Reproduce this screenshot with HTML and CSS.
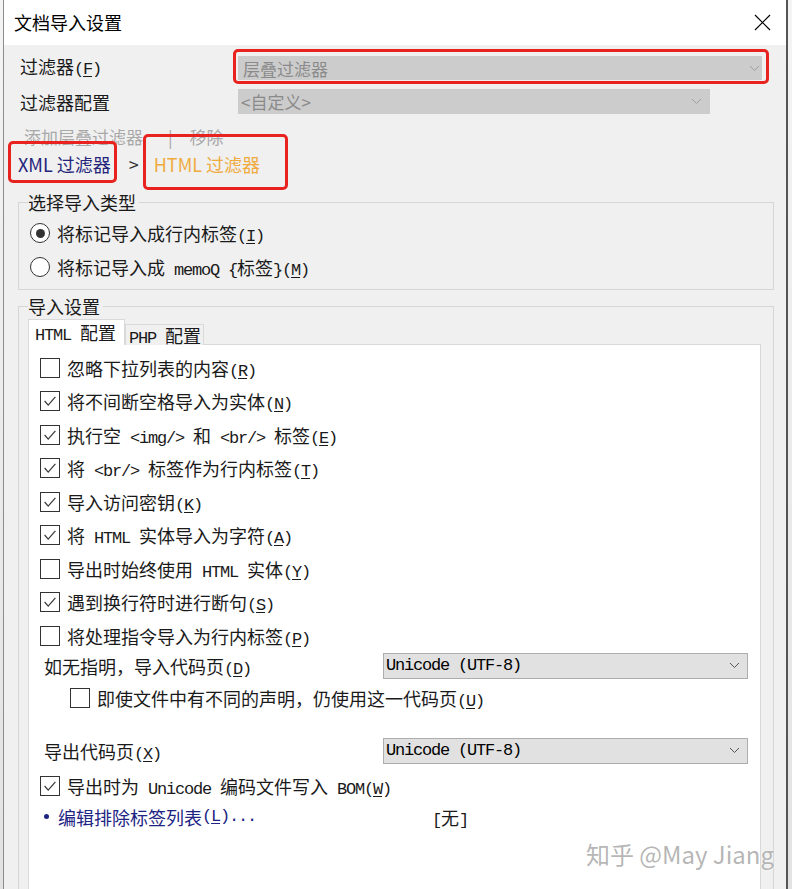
FILE: index.html
```html
<!DOCTYPE html>
<html lang="zh-CN">
<head>
  <meta charset="UTF-8">
  <title>文档导入设置</title>
  <link rel="stylesheet" href="styles.css">
</head>
<body>
  <div class="screen">
    <div class="dialog">
      <div class="titlebar">
        <span class="title">文档导入设置</span>
        <svg class="close" width="17" height="17" viewBox="0 0 17 17">
          <path d="M1 1 L16 16 M16 1 L1 16" stroke="#000" stroke-width="1.2" fill="none"/>
        </svg>
      </div>

      <div class="content">
        <div class="row">
          <label class="row-label">过滤器<span class="m">(<u>F</u>)</span></label>
          <div class="select select-filter marked">
            <span>层叠过滤器</span>
            <svg class="chevron" width="11" height="7" viewBox="0 0 11 7"><path d="M1 1 L5.5 5.5 L10 1" stroke="#a0a0a0" fill="none"/></svg>
          </div>
        </div>

        <div class="row row-config">
          <label class="row-label">过滤器配置</label>
          <div class="select select-config">
            <span>&lt;自定义&gt;</span>
            <svg class="chevron" width="11" height="7" viewBox="0 0 11 7"><path d="M1 1 L5.5 5.5 L10 1" stroke="#a0a0a0" fill="none"/></svg>
          </div>
        </div>

        <div class="links">
          <span>添加层叠过滤器</span>
          <span class="sep">|</span>
          <span class="remove">移除</span>
        </div>

        <div class="crumbs">
          <span class="crumb crumb-xml">XML 过滤器</span>
          <span class="crumb-arrow">&gt;</span>
          <span class="crumb crumb-html">HTML 过滤器</span>
        </div>

        <fieldset class="group group-type">
          <legend>选择导入类型</legend>
          <div class="radio-row">
            <span class="radio checked"></span>
            <span>将标记导入成行内标签<span class="m">(<u>I</u>)</span></span>
          </div>
          <div class="radio-row">
            <span class="radio"></span>
            <span>将标记导入成<span class="m"> memoQ {</span>标签<span class="m">}(<u>M</u>)</span></span>
          </div>
        </fieldset>

        <fieldset class="group group-settings">
          <legend>导入设置</legend>
          <div class="tabs">
            <div class="tab active"><span class="m">HTML </span>配置</div>
            <div class="tab"><span class="m">PHP </span>配置</div>
          </div>

          <div class="panel">
            <div class="check-row">
              <span class="check"></span>
              <span>忽略下拉列表的内容<span class="m">(<u>R</u>)</span></span>
            </div>
            <div class="check-row">
              <span class="check checked"><svg viewBox="0 0 20 20"><path d="M4 10 L8 14.5 L16 5.5"/></svg></span>
              <span>将不间断空格导入为实体<span class="m">(<u>N</u>)</span></span>
            </div>
            <div class="check-row">
              <span class="check checked"><svg viewBox="0 0 20 20"><path d="M4 10 L8 14.5 L16 5.5"/></svg></span>
              <span>执行空<span class="m"> &lt;img/&gt; </span>和<span class="m"> &lt;br/&gt; </span>标签<span class="m">(<u>E</u>)</span></span>
            </div>
            <div class="check-row">
              <span class="check checked"><svg viewBox="0 0 20 20"><path d="M4 10 L8 14.5 L16 5.5"/></svg></span>
              <span>将<span class="m"> &lt;br/&gt; </span>标签作为行内标签<span class="m">(<u>T</u>)</span></span>
            </div>
            <div class="check-row">
              <span class="check checked"><svg viewBox="0 0 20 20"><path d="M4 10 L8 14.5 L16 5.5"/></svg></span>
              <span>导入访问密钥<span class="m">(<u>K</u>)</span></span>
            </div>
            <div class="check-row">
              <span class="check checked"><svg viewBox="0 0 20 20"><path d="M4 10 L8 14.5 L16 5.5"/></svg></span>
              <span>将<span class="m"> HTML </span>实体导入为字符<span class="m">(<u>A</u>)</span></span>
            </div>
            <div class="check-row">
              <span class="check"></span>
              <span>导出时始终使用<span class="m"> HTML </span>实体<span class="m">(<u>Y</u>)</span></span>
            </div>
            <div class="check-row">
              <span class="check checked"><svg viewBox="0 0 20 20"><path d="M4 10 L8 14.5 L16 5.5"/></svg></span>
              <span>遇到换行符时进行断句<span class="m">(<u>S</u>)</span></span>
            </div>
            <div class="check-row">
              <span class="check"></span>
              <span>将处理指令导入为行内标签<span class="m">(<u>P</u>)</span></span>
            </div>

            <div class="code-row">
              <label class="code-label">如无指明，导入代码页<span class="m">(<u>D</u>)</span></label>
              <div class="select select-code">
                <span class="m">Unicode (UTF-8)</span>
                <svg class="chevron" width="11" height="7" viewBox="0 0 11 7"><path d="M1 1 L5.5 5.5 L10 1" stroke="#555" fill="none"/></svg>
              </div>
            </div>
            <div class="check-row sub-row">
              <span class="check"></span>
              <span>即使文件中有不同的声明，仍使用这一代码页<span class="m">(<u>U</u>)</span></span>
            </div>

            <div class="code-row export-row">
              <label class="code-label">导出代码页<span class="m">(<u>X</u>)</span></label>
              <div class="select select-code">
                <span class="m">Unicode (UTF-8)</span>
                <svg class="chevron" width="11" height="7" viewBox="0 0 11 7"><path d="M1 1 L5.5 5.5 L10 1" stroke="#555" fill="none"/></svg>
              </div>
            </div>
            <div class="check-row bom-row">
              <span class="check checked"><svg viewBox="0 0 20 20"><path d="M4 10 L8 14.5 L16 5.5"/></svg></span>
              <span>导出时为<span class="m"> Unicode </span>编码文件写入<span class="m"> BOM(<u>W</u>)</span></span>
            </div>

            <div class="link-row">
              <span class="link"><span class="bullet"></span>编辑排除标签列表<span class="m">(<u>L</u>)...</span></span>
              <span class="none"><span class="m">[</span>无<span class="m">]</span></span>
            </div>
          </div>
        </fieldset>
      </div>
    </div>

    <div class="watermark">知乎 @May Jiang</div>
  </div>
</body>
</html>
```

FILE: styles.css
```css
* {
  box-sizing: border-box;
}

body {
  margin: 0;
  font-family: "Noto Sans CJK SC", sans-serif;
  font-size: 18px;
  color: #1a1a1a;
  background: #e8e8e8;
}

.screen {
  position: relative;
  width: 792px;
  height: 889px;
  overflow: hidden;
  background: linear-gradient(to bottom, #f4f4f4, #e2e2e2);
}

/* half-width latin like the dialog's system font */
.m {
  font-family: "Liberation Mono", monospace;
  font-size: 17px;
  letter-spacing: -1.2px;
}

u {
  text-decoration-thickness: 1px;
  text-underline-offset: 2px;
}

/* dialog frame */

.dialog {
  margin-left: 3px;
  width: 785px;
  height: 889px;
  border-left: 1px solid #8c8c8c;
  border-right: 2px solid #555;
  background: #f0f0f0;
  overflow: hidden;
}

.titlebar {
  height: 45px;
  background: #fff;
  display: flex;
  align-items: center;
  justify-content: space-between;
  padding: 0 15px 0 10px;
}

.title {
  font-size: 18px;
  line-height: 45px;
  color: #000;
}

.content {
  padding-top: 11px;
}

/* filter rows */

.row {
  display: flex;
  align-items: center;
  height: 24px;
  padding-left: 16px;
}

.row-config {
  margin-top: 9px;
  height: 25px;
}

.row-label {
  width: 218px;
  line-height: 24px;
}

.select {
  position: relative;
  display: flex;
  align-items: center;
  justify-content: space-between;
  background: #cccccc;
  color: #8a8a8a;
  height: 100%;
  font-size: 17px;
}

.select-filter {
  width: 524px;
  padding: 0 2px 0 5px;
}

.select-config {
  width: 472px;
  padding: 0 8px 0 3px;
}

.marked::after {
  content: "";
  position: absolute;
  top: -7px;
  bottom: -4px;
  left: -5px;
  right: -7px;
  border: 3px solid #e8231f;
  border-radius: 5px;
}

.links {
  margin-top: 11px;
  height: 22px;
  padding-left: 20px;
  display: flex;
  align-items: center;
  color: #a8a8a8;
  font-size: 17px;
}

.links .sep {
  margin-left: 25px;
}

.links .remove {
  margin-left: 17px;
}

.crumbs {
  margin-top: 2px;
  height: 30px;
  padding-left: 14px;
  display: flex;
  align-items: center;
  font-size: 18px;
}

.crumb {
  position: relative;
  line-height: 22px;
}

.crumb::after {
  content: "";
  position: absolute;
  border: 3px solid #e8231f;
  border-radius: 5px;
}

.crumb-xml {
  color: #24247a;
}

.crumb-xml::after {
  top: -12px;
  bottom: -8px;
  left: -10px;
  right: -6px;
}

.crumb-arrow {
  margin-left: 18px;
  color: #333;
}

.crumb-html {
  margin-left: 15px;
  color: #efab3e;
}

.crumb-html::after {
  top: -19px;
  bottom: -15px;
  left: -11px;
  right: -28px;
}

/* groups */

.group {
  margin: 12px 12px 0 14px;
  border: 1px solid #d6d6d6;
  padding: 3px 0 5px 9px;
  min-width: 0;
}

.group legend {
  padding: 0 3px 0 0;
  line-height: 22px;
}

.radio-row {
  display: flex;
  align-items: center;
  gap: 7px;
  height: 34px;
  padding-left: 2px;
}

.radio {
  width: 20px;
  height: 20px;
  border: 1px solid #333;
  border-radius: 50%;
  background: #fff;
  display: flex;
  align-items: center;
  justify-content: center;
}

.radio.checked::after {
  content: "";
  width: 9px;
  height: 9px;
  border-radius: 50%;
  background: #333;
}

.group-settings {
  margin-top: 5px;
  padding: 2px 12px 0 9px;
}

/* tabs */

.tabs {
  display: flex;
  align-items: flex-end;
  height: 26px;
  position: relative;
  z-index: 1;
  margin-bottom: -1px;
}

.tab {
  height: 21px;
  line-height: 20px;
  border: 1px solid #d9d9d9;
  border-bottom: none;
  background: #f0f0f0;
  padding: 0 2px 0 3px;
}

.tab.active {
  height: 26px;
  line-height: 24px;
  background: #fff;
  padding: 0 8px 0 6px;
}

.panel {
  background: #fff;
  border: 1px solid #d9d9d9;
  height: 580px;
  padding: 6px 0 0 11px;
}

.check-row {
  display: flex;
  align-items: center;
  gap: 7px;
  height: 33.5px;
}

.check {
  width: 20px;
  height: 20px;
  border: 1px solid #333;
  background: #fff;
  flex-shrink: 0;
}

.check svg {
  display: block;
  width: 18px;
  height: 18px;
}

.check path {
  fill: none;
  stroke: #3a3a3a;
  stroke-width: 1.4;
}

.code-row {
  display: flex;
  align-items: center;
  height: 26px;
  padding-left: 4px;
}

.code-label {
  width: 339px;
}

.select-code {
  width: 365px;
  background: #e1e1e1;
  border: 1px solid #adadad;
  color: #000;
  padding: 0 7px 0 2px;
}

.sub-row {
  margin-top: 2px;
  height: 34px;
  padding-left: 30px;
}

.export-row {
  margin-top: 23px;
}

.bom-row {
  margin-top: 5px;
  height: 34px;
}

.link-row {
  display: grid;
  grid-template-columns: 388px auto;
  align-items: center;
  height: 28px;
  padding-left: 4px;
}

.link {
  display: flex;
  align-items: center;
  color: #1d2484;
}

.bullet {
  width: 5px;
  height: 5px;
  border-radius: 50%;
  background: #1d2484;
  margin-right: 9px;
}

.none {
  color: #1a1a1a;
}

.watermark {
  position: absolute;
  right: 18px;
  top: 836px;
  font-size: 24px;
  color: rgba(150, 150, 150, 0.7);
  text-shadow: 0 0 2px #fff;
}
```
